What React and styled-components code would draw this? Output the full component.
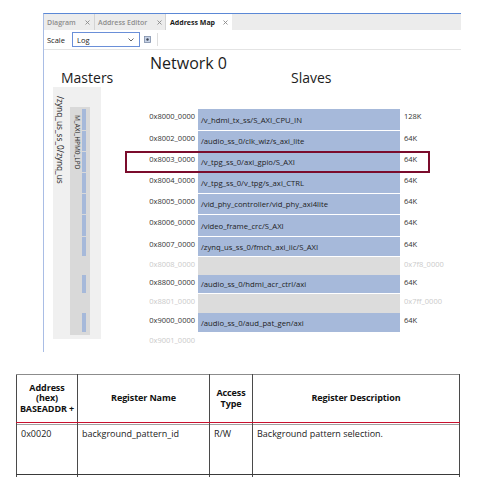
import React from 'react';
import styled, { createGlobalStyle } from 'styled-components';

const GlobalStyle = createGlobalStyle`
  html, body { margin: 0; padding: 0; background: #ffffff; }
  body { font-family: "Open Sans", "Noto Sans", sans-serif; color: #1c1c1c; }
  * { box-sizing: border-box; }
`;

const rows = [
  { addr: '0x8000_0000', name: '/v_hdmi_tx_ss/S_AXI_CPU_IN', size: '128K', kind: 'used', h: 22 },
  { addr: '0x8002_0000', name: '/audio_ss_0/clk_wiz/s_axi_lite', size: '64K', kind: 'used', h: 21 },
  { addr: '0x8003_0000', name: '/v_tpg_ss_0/axi_gpio/S_AXI', size: '64K', kind: 'used', h: 21, highlight: true },
  { addr: '0x8004_0000', name: '/v_tpg_ss_0/v_tpg/s_axi_CTRL', size: '64K', kind: 'used', h: 21 },
  { addr: '0x8005_0000', name: '/vid_phy_controller/vid_phy_axi4lite', size: '64K', kind: 'used', h: 21 },
  { addr: '0x8006_0000', name: '/video_frame_crc/S_AXI', size: '64K', kind: 'used', h: 22 },
  { addr: '0x8007_0000', name: '/zynq_us_ss_0/fmch_axi_iic/S_AXI', size: '64K', kind: 'used', h: 20 },
  { addr: '0x8008_0000', name: '', size: '0x7f8_0000', kind: 'free', h: 18 },
  { addr: '0x8800_0000', name: '/audio_ss_0/hdmi_acr_ctrl/axi', size: '64K', kind: 'used', h: 19 },
  { addr: '0x8801_0000', name: '', size: '0x7ff_0000', kind: 'free', h: 19 },
  { addr: '0x9000_0000', name: '/audio_ss_0/aud_pat_gen/axi', size: '64K', kind: 'used', h: 20 },
  { addr: '0x9001_0000', name: '', size: '', kind: 'end', h: 14 },
];

const barHeight = (r) => (r.kind === 'used' ? r.h - 1 : r.kind === 'free' ? r.h : 0);
const barColor = { used: '#a6b9da', free: '#dcdcdc', end: 'transparent' };

const Page = styled.div`
  width: 488px;
  height: 498px;
  overflow: hidden;
  display: flex;
  flex-direction: column;
`;

/* ---------- Vivado panel ---------- */
const Panel = styled.div`
  margin: 13px 0 0 43px;
  width: 418px;
  height: 339px;
  border-top: 1px solid #5b88d6;
  border-left: 1px solid #a9bde5;
  display: flex;
  flex-direction: column;
`;

const TabBar = styled.div`
  height: 16px;
  flex-shrink: 0;
  background: #ececec;
  display: flex;
`;

const Tab = styled.div`
  width: ${(p) => p.$w}px;
  display: flex;
  align-items: center;
  justify-content: space-between;
  padding: 0 ${(p) => p.$pr}px 0 ${(p) => p.$pl}px;
  background: ${(p) => (p.$active ? '#ffffff' : 'transparent')};
  border-right: 1px solid ${(p) => (p.$active ? 'transparent' : '#d3d3d3')};
  font-size: 7px;
  font-weight: ${(p) => (p.$active ? 700 : 600)};
  color: ${(p) => (p.$active ? '#1a1a1a' : '#8d8d8d')};
  white-space: nowrap;
`;

const CloseIcon = () => (
  <svg width="5" height="5" viewBox="0 0 5 5">
    <path d="M0.5 0.5 L4.5 4.5 M4.5 0.5 L0.5 4.5" stroke="#8a8a8a" strokeWidth="0.9" />
  </svg>
);

const Toolbar = styled.div`
  height: 20px;
  flex-shrink: 0;
  border-bottom: 1px solid #e4e4e4;
  display: flex;
  align-items: center;
  padding-left: 3px;
`;

const ToolLabel = styled.span`
  width: 25px;
  font-size: 7.5px;
  color: #222;
`;

const Select = styled.div`
  width: 68px;
  height: 15px;
  border: 1px solid #6a8fd8;
  background: #fff;
  display: flex;
  align-items: center;
  justify-content: space-between;
  padding: 0 5px 0 4px;
  font-size: 7.5px;
  color: #222;
`;

const IconSlot = styled.div`
  margin-left: 4px;
  display: flex;
`;

const ToolSep = styled.div`
  margin-left: 6px;
  width: 1px;
  height: 13px;
  background: #dedede;
`;

const Canvas = styled.div`
  flex: 1;
  display: flex;
  flex-direction: column;
`;

const NetworkTitle = styled.div`
  margin: 6px 0 0 106px;
  font-size: 16px;
  line-height: 15px;
  color: #1c1c1c;
`;

const TitlesRow = styled.div`
  display: grid;
  grid-template-columns: 230px auto;
  padding-left: 17px;
  font-size: 14px;
  line-height: 14px;
  color: #1c1c1c;
`;

const Body = styled.div`
  display: flex;
  align-items: flex-start;
  margin-top: 2px;
  padding-left: 9px;
`;

const MastersBox = styled.div`
  width: 48px;
  height: 252px;
  background: #f0f0f0;
  display: flex;
  align-items: flex-start;
  padding: 9px 0 0 2px;
`;

const VerticalLabel = styled.div`
  writing-mode: vertical-rl;
  font-size: ${(p) => p.$size}px;
  line-height: 10px;
  width: 10px;
  margin-top: ${(p) => p.$top}px;
  color: #222;
  white-space: nowrap;
`;

const InnerBox = styled.div`
  margin: 11px 0 0 5px;
  width: 20px;
  height: 228px;
  background: #d9d9d9;
  display: flex;
  align-items: flex-start;
  padding: 2px 0 0 2px;
`;

const SegColumn = styled.div`
  width: 4px;
  display: flex;
  flex-direction: column;
`;

const SegRow = styled.div`
  height: ${(p) => p.$h}px;
`;

const SegFill = styled.div`
  height: ${(p) => p.$h}px;
  background: ${(p) => p.$color};
`;

const SlaveList = styled.div`
  margin-top: 22px;
  display: flex;
  flex-direction: column;
`;

const SlaveRow = styled.div`
  position: relative;
  height: ${(p) => p.$h}px;
  display: flex;
  align-items: flex-start;
`;

const Addr = styled.div`
  width: 94px;
  margin-right: 3px;
  padding-top: 2px;
  text-align: right;
  font-size: 7.5px;
  line-height: 10px;
  color: ${(p) => (p.$muted ? '#cacaca' : '#333')};
  white-space: nowrap;
`;

const Bar = styled.div`
  width: 202px;
  height: ${(p) => p.$h}px;
  background: ${(p) => p.$color};
  display: flex;
  align-items: center;
  padding-left: 3px;
  font-size: 7.7px;
  color: #1e1e1e;
  white-space: nowrap;
  overflow: hidden;
`;

const Size = styled.div`
  padding: 2px 0 0 4px;
  font-size: 7.5px;
  line-height: 10px;
  color: ${(p) => (p.$muted ? '#cacaca' : '#333')};
  white-space: nowrap;
`;

const Highlight = styled.div`
  position: absolute;
  left: 24px;
  top: -1px;
  width: 305px;
  height: 22px;
  border: 2px solid #7b0c2c;
  pointer-events: none;
`;

/* ---------- Register table ---------- */
const Table = styled.table`
  margin: 22px 0 0 16px;
  width: 443px;
  table-layout: fixed;
  border-collapse: collapse;
  font-family: "Open Sans", "Noto Sans", sans-serif;
`;

const HeadCell = styled.th`
  height: 48px;
  padding: 0;
  border-top: 1px solid #8c8c8c;
  border-left: 1px solid #4a4a4a;
  border-right: 1px solid #4a4a4a;
  border-bottom: 1px solid #c8102e;
  font-size: 9px;
  line-height: 10.5px;
  font-weight: 700;
  color: #111;
  text-align: center;
  vertical-align: middle;
  white-space: nowrap;
  letter-spacing: -0.1px;
`;

const Cell = styled.td`
  height: ${(p) => p.$h}px;
  padding: ${(p) => (p.$h > 10 ? '5px 4px 0 4px' : '0')};
  border-left: 1px solid #4a4a4a;
  border-right: 1px solid #4a4a4a;
  border-bottom: ${(p) => (p.$h > 10 ? '1px solid #3a3a3a' : 'none')};
  box-shadow: ${(p) => (p.$h > 10 ? 'inset 0 1px 0 #fff, inset 0 2px 0 #a0a0a0' : 'none')};
  font-size: 9px;
  line-height: 11px;
  color: #222;
  text-align: left;
  vertical-align: top;
  white-space: nowrap;
`;

export default function App() {
  return (
    <>
      <GlobalStyle />
      <Page>
        <Panel>
          <TabBar>
            <Tab $w={51} $pl={3} $pr={4}>
              <span>Diagram</span>
              <CloseIcon />
            </Tab>
            <Tab $w={71} $pl={3} $pr={3}>
              <span>Address Editor</span>
              <CloseIcon />
            </Tab>
            <Tab $w={66} $pl={4} $pr={3} $active>
              <span>Address Map</span>
              <CloseIcon />
            </Tab>
          </TabBar>
          <Toolbar>
            <ToolLabel>Scale</ToolLabel>
            <Select>
              <span>Log</span>
              <svg width="6" height="4" viewBox="0 0 6 4">
                <path d="M0.5 0.5 L3 3 L5.5 0.5" fill="none" stroke="#555" strokeWidth="0.9" />
              </svg>
            </Select>
            <IconSlot>
              <svg width="7" height="7" viewBox="0 0 7 7">
                <rect x="0.5" y="0.5" width="6" height="6" fill="#c8d3e6" stroke="#7d8da8" strokeWidth="0.8" />
                <circle cx="3.5" cy="3.5" r="1.2" fill="#3c4656" />
              </svg>
            </IconSlot>
            <ToolSep />
          </Toolbar>
          <Canvas>
            <NetworkTitle>Network 0</NetworkTitle>
            <TitlesRow>
              <span>Masters</span>
              <span>Slaves</span>
            </TitlesRow>
            <Body>
              <MastersBox>
                <VerticalLabel $size={8.3} $top={0}>/zynq_us_ss_0/zynq_us</VerticalLabel>
                <InnerBox>
                  <VerticalLabel $size={6.5} $top={6}>M_AXI_HPM0_LPD</VerticalLabel>
                  <SegColumn>
                    {rows
                      .filter((r) => r.kind !== 'end')
                      .map((r) => (
                        <SegRow key={r.addr} $h={r.h}>
                          <SegFill
                            $h={barHeight(r)}
                            $color={r.kind === 'used' ? '#a6b9da' : 'transparent'}
                          />
                        </SegRow>
                      ))}
                  </SegColumn>
                </InnerBox>
              </MastersBox>
              <SlaveList>
                {rows.map((r) => (
                  <SlaveRow key={r.addr} $h={r.h}>
                    <Addr $muted={r.kind !== 'used'}>{r.addr}</Addr>
                    <Bar $h={barHeight(r)} $color={barColor[r.kind]}>
                      {r.name}
                    </Bar>
                    <Size $muted={r.kind === 'free'}>{r.size}</Size>
                    {r.highlight && <Highlight />}
                  </SlaveRow>
                ))}
              </SlaveList>
            </Body>
          </Canvas>
        </Panel>

        <Table>
          <colgroup>
            <col style={{ width: 61 }} />
            <col style={{ width: 132 }} />
            <col style={{ width: 43 }} />
            <col style={{ width: 207 }} />
          </colgroup>
          <thead>
            <tr>
              <HeadCell>
                Address
                <br />
                (hex)
                <br />
                BASEADDR +
              </HeadCell>
              <HeadCell>Register Name</HeadCell>
              <HeadCell>
                Access
                <br />
                Type
              </HeadCell>
              <HeadCell>Register Description</HeadCell>
            </tr>
          </thead>
          <tbody>
            <tr>
              <Cell $h={52}>0x0020</Cell>
              <Cell $h={52}>background_pattern_id</Cell>
              <Cell $h={52}>R/W</Cell>
              <Cell $h={52}>Background pattern selection.</Cell>
            </tr>
            <tr>
              <Cell $h={2} />
              <Cell $h={2} />
              <Cell $h={2} />
              <Cell $h={2} />
            </tr>
          </tbody>
        </Table>
      </Page>
    </>
  );
}
